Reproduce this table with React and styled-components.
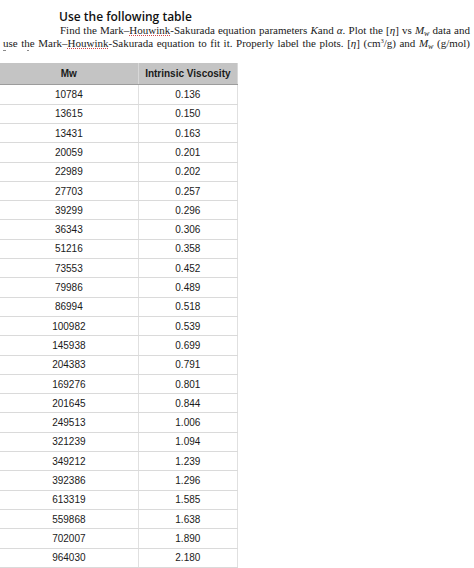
import styled, { createGlobalStyle } from "styled-components";

const GlobalStyle = createGlobalStyle`
  html, body {
    margin: 0;
    padding: 0;
    background: #ffffff;
  }
  body {
    width: 474px;
    height: 568px;
    overflow: hidden;
  }
`;

const rows = [
  ["10784", "0.136"],
  ["13615", "0.150"],
  ["13431", "0.163"],
  ["20059", "0.201"],
  ["22989", "0.202"],
  ["27703", "0.257"],
  ["39299", "0.296"],
  ["36343", "0.306"],
  ["51216", "0.358"],
  ["73553", "0.452"],
  ["79986", "0.489"],
  ["86994", "0.518"],
  ["100982", "0.539"],
  ["145938", "0.699"],
  ["204383", "0.791"],
  ["169276", "0.801"],
  ["201645", "0.844"],
  ["249513", "1.006"],
  ["321239", "1.094"],
  ["349212", "1.239"],
  ["392386", "1.296"],
  ["613319", "1.585"],
  ["559868", "1.638"],
  ["702007", "1.890"],
  ["964030", "2.180"],
];

const Page = styled.div`
  display: flex;
  flex-direction: column;
  padding-top: 9px;
`;

const Heading = styled.h1`
  margin: 0;
  padding-left: 59px;
  font-family: "Open Sans", "Liberation Sans", sans-serif;
  font-size: 12px;
  font-weight: 600;
  line-height: 15px;
  color: #111;
`;

const Para = styled.div`
  padding: 0 4px 0 3px;
  font-family: "Liberation Serif", "Times New Roman", serif;
  font-size: 11px;
  line-height: 12.7px;
  color: #1a1a1a;
`;

const Line = styled.div`
  text-align: justify;
  text-align-last: justify;
  white-space: nowrap;
  text-indent: ${(p) => p.$indent || 0}px;
`;

/* tops of the next line, cut off by the table below */
const Fragments = styled.div`
  display: flex;
  gap: 21px;
  height: 3px;
  padding: 1px 0 0 3px;
  box-sizing: border-box;
`;

const Tick = styled.span`
  width: ${(p) => p.$w}px;
  height: 1px;
  background: #8a8a8a;
`;

const Spell = styled.span`
  text-decoration: underline dotted #d04848;
  text-decoration-thickness: 1px;
  text-underline-offset: 1px;
`;

const I = styled.i`
  font-style: italic;
`;

const Sub = styled.sub`
  font-size: 8px;
  font-style: italic;
  vertical-align: -2px;
  line-height: 0;
`;

const Sup = styled.sup`
  font-size: 6px;
  vertical-align: 4px;
  line-height: 0;
`;

const Table = styled.table`
  margin-top: 11px;
  border-collapse: collapse;
  width: 238px;
  font-family: "Liberation Sans", Arial, sans-serif;
  font-size: 10px;
  color: #1a1a1a;
`;

const Head = styled.th`
  height: 21px;
  padding: 0;
  background: #c4c4c4;
  border-bottom: 1px solid #9c9c9c;
  border-right: 1px solid #d8d8d8;
  font-weight: bold;
  text-align: center;
  width: ${(p) => p.$w}px;
`;

const Cell = styled.td`
  height: 18.3px;
  padding: 0;
  border-bottom: 1px solid #dadada;
  border-right: 1px solid #e0e0e0;
  text-align: center;
`;

function M() {
  return (
    <>
      <I>M</I>
      <Sub>w</Sub>
    </>
  );
}

export default function App() {
  return (
    <>
      <GlobalStyle />
      <Page>
        <Heading>Use the following table</Heading>
        <Para>
          <Line $indent={57}>
            Find the Mark–<Spell>Houwink</Spell>-Sakurada equation parameters{" "}
            <I>K</I>and <I>α</I>. Plot the [<I>η</I>] vs <M /> data and
          </Line>
          <Line>
            use the Mark–<Spell>Houwink</Spell>-Sakurada equation to fit it.
            Properly label the plots. [<I>η</I>] (cm<Sup>3</Sup>/g) and <M />{" "}
            (g/mol)
          </Line>
        </Para>
        <Fragments>
          <Tick $w={3} />
          <Tick $w={2} />
        </Fragments>
        <Table>
          <thead>
            <tr>
              <Head $w={139}>Mw</Head>
              <Head $w={99}>Intrinsic Viscosity</Head>
            </tr>
          </thead>
          <tbody>
            {rows.map(([mw, iv]) => (
              <tr key={mw}>
                <Cell>{mw}</Cell>
                <Cell>{iv}</Cell>
              </tr>
            ))}
          </tbody>
        </Table>
      </Page>
    </>
  );
}
